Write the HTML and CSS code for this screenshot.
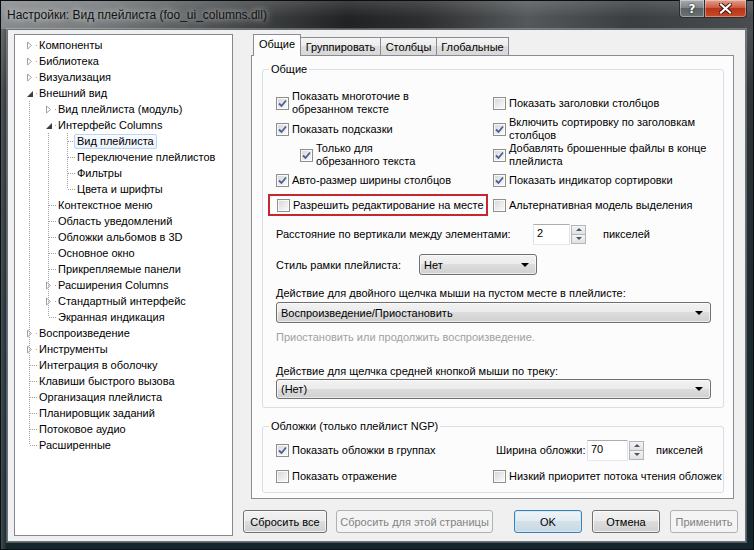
FILE: index.html
```html
<!DOCTYPE html>
<html lang="ru">
<head>
<meta charset="utf-8">
<title>Настройки: Вид плейлиста</title>
<link rel="stylesheet" href="styles.css">
</head>
<body>
<div class="window">
  <div class="titlebar">
    <div class="caption">Настройки: Вид плейлиста (foo_ui_columns.dll)</div>
    <div class="capbtns">
      <div class="capbtn help">?</div>
      <div class="capbtn close">
        <svg width="13" height="11" viewBox="0 0 13 11"><path d="M2 1.5 L11 9.5 M11 1.5 L2 9.5" stroke="#3a1208" stroke-width="4" stroke-linecap="square"/><path d="M2 1.5 L11 9.5 M11 1.5 L2 9.5" stroke="#ffffff" stroke-width="2.2" stroke-linecap="square"/></svg>
      </div>
    </div>
  </div>
  <div class="client">
    <div class="tree">
      <div class="row l0"><span class="tw"><svg class="tri" width="6" height="9" viewBox="0 0 6 9"><path d="M0.5 1 L4.5 4.5 L0.5 8 Z" fill="none" stroke="#a3a3a3"/></svg><span class="dot"></span></span><span class="txt">Компоненты</span></div>
      <div class="row l0"><span class="tw"><svg class="tri" width="6" height="9" viewBox="0 0 6 9"><path d="M0.5 1 L4.5 4.5 L0.5 8 Z" fill="none" stroke="#a3a3a3"/></svg><span class="dot"></span></span><span class="txt">Библиотека</span></div>
      <div class="row l0"><span class="tw"><svg class="tri" width="6" height="9" viewBox="0 0 6 9"><path d="M0.5 1 L4.5 4.5 L0.5 8 Z" fill="none" stroke="#a3a3a3"/></svg><span class="dot"></span></span><span class="txt">Визуализация</span></div>
      <div class="row l0"><span class="tw"><svg class="tri" width="6" height="9" viewBox="0 0 6 9"><path d="M6 2 V8 H0 Z" fill="#3d3d3d"/></svg><span class="dot"></span></span><span class="txt">Внешний вид</span></div>
      <div class="branch b0">
        <div class="row l1"><span class="tw"><svg class="tri" width="6" height="9" viewBox="0 0 6 9"><path d="M0.5 1 L4.5 4.5 L0.5 8 Z" fill="none" stroke="#a3a3a3"/></svg><span class="dot"></span></span><span class="txt">Вид плейлиста (модуль)</span></div>
        <div class="row l1"><span class="tw"><svg class="tri" width="6" height="9" viewBox="0 0 6 9"><path d="M6 2 V8 H0 Z" fill="#3d3d3d"/></svg><span class="dot"></span></span><span class="txt">Интерфейс Columns</span></div>
        <div class="branch b1">
          <div class="branch b2">
            <div class="row l2"><span class="tw leaf"></span><span class="txt sel">Вид плейлиста</span></div>
            <div class="row l2"><span class="tw leaf"></span><span class="txt">Переключение плейлистов</span></div>
            <div class="row l2"><span class="tw leaf"></span><span class="txt">Фильтры</span></div>
            <div class="row l2"><span class="tw leaf"></span><span class="txt">Цвета и шрифты</span></div>
          </div>
          <div class="row l1"><span class="tw leaf"></span><span class="txt">Контекстное меню</span></div>
          <div class="row l1"><span class="tw leaf"></span><span class="txt">Область уведомлений</span></div>
          <div class="row l1"><span class="tw leaf"></span><span class="txt">Обложки альбомов в 3D</span></div>
          <div class="row l1"><span class="tw leaf"></span><span class="txt">Основное окно</span></div>
          <div class="row l1"><span class="tw leaf"></span><span class="txt">Прикрепляемые панели</span></div>
          <div class="row l1"><span class="tw"><svg class="tri" width="6" height="9" viewBox="0 0 6 9"><path d="M0.5 1 L4.5 4.5 L0.5 8 Z" fill="none" stroke="#a3a3a3"/></svg><span class="dot"></span></span><span class="txt">Расширения Columns</span></div>
          <div class="row l1"><span class="tw"><svg class="tri" width="6" height="9" viewBox="0 0 6 9"><path d="M0.5 1 L4.5 4.5 L0.5 8 Z" fill="none" stroke="#a3a3a3"/></svg><span class="dot"></span></span><span class="txt">Стандартный интерфейс</span></div>
          <div class="row l1"><span class="tw leaf"></span><span class="txt">Экранная индикация</span></div>
        </div>
        <div class="row l0"><span class="tw"><svg class="tri" width="6" height="9" viewBox="0 0 6 9"><path d="M0.5 1 L4.5 4.5 L0.5 8 Z" fill="none" stroke="#a3a3a3"/></svg><span class="dot"></span></span><span class="txt">Воспроизведение</span></div>
        <div class="row l0"><span class="tw"><svg class="tri" width="6" height="9" viewBox="0 0 6 9"><path d="M0.5 1 L4.5 4.5 L0.5 8 Z" fill="none" stroke="#a3a3a3"/></svg><span class="dot"></span></span><span class="txt">Инструменты</span></div>
        <div class="row l0"><span class="tw leaf"></span><span class="txt">Интеграция в оболочку</span></div>
        <div class="row l0"><span class="tw leaf"></span><span class="txt">Клавиши быстрого вызова</span></div>
        <div class="row l0"><span class="tw leaf"></span><span class="txt">Организация плейлиста</span></div>
        <div class="row l0"><span class="tw leaf"></span><span class="txt">Планировщик заданий</span></div>
        <div class="row l0"><span class="tw leaf"></span><span class="txt">Потоковое аудио</span></div>
        <div class="row l0"><span class="tw leaf"></span><span class="txt">Расширенные</span></div>
      </div>
    </div>

    <div class="main">
      <div class="tabstrip">
        <div class="tab active t1">Общие</div>
        <div class="tab t2">Группировать</div>
        <div class="tab t3">Столбцы</div>
        <div class="tab t4">Глобальные</div>
      </div>
      <div class="panel">
        <fieldset class="group g1">
          <legend>Общие</legend>
          <div class="opts">
            <label class="cb"><span class="box on"><svg width="11" height="11" viewBox="0 0 11 11"><path d="M2 5.5 L4.5 8 L9 2.5" fill="none" stroke="#4a5f97" stroke-width="1.8"/></svg></span><span class="lbl">Показать многоточие в<br>обрезанном тексте</span></label>
            <label class="cb"><span class="box"></span><span class="lbl">Показать заголовки столбцов</span></label>

            <label class="cb"><span class="box on"><svg width="11" height="11" viewBox="0 0 11 11"><path d="M2 5.5 L4.5 8 L9 2.5" fill="none" stroke="#4a5f97" stroke-width="1.8"/></svg></span><span class="lbl">Показать подсказки</span></label>
            <label class="cb"><span class="box on"><svg width="11" height="11" viewBox="0 0 11 11"><path d="M2 5.5 L4.5 8 L9 2.5" fill="none" stroke="#4a5f97" stroke-width="1.8"/></svg></span><span class="lbl">Включить сортировку по заголовкам<br>столбцов</span></label>

            <label class="cb indent"><span class="box on"><svg width="11" height="11" viewBox="0 0 11 11"><path d="M2 5.5 L4.5 8 L9 2.5" fill="none" stroke="#4a5f97" stroke-width="1.8"/></svg></span><span class="lbl">Только для<br>обрезанного текста</span></label>
            <label class="cb"><span class="box on"><svg width="11" height="11" viewBox="0 0 11 11"><path d="M2 5.5 L4.5 8 L9 2.5" fill="none" stroke="#4a5f97" stroke-width="1.8"/></svg></span><span class="lbl">Добавлять брошенные файлы в конце<br>плейлиста</span></label>

            <label class="cb"><span class="box on"><svg width="11" height="11" viewBox="0 0 11 11"><path d="M2 5.5 L4.5 8 L9 2.5" fill="none" stroke="#4a5f97" stroke-width="1.8"/></svg></span><span class="lbl">Авто-размер ширины столбцов</span></label>
            <label class="cb"><span class="box on"><svg width="11" height="11" viewBox="0 0 11 11"><path d="M2 5.5 L4.5 8 L9 2.5" fill="none" stroke="#4a5f97" stroke-width="1.8"/></svg></span><span class="lbl">Показать индикатор сортировки</span></label>

            <label class="cb hl"><span class="box"></span><span class="lbl">Разрешить редактирование на месте</span></label>
            <label class="cb"><span class="box"></span><span class="lbl">Альтернативная модель выделения</span></label>
          </div>

          <div class="frow spacing">
            <span class="flabel w-spacing">Расстояние по вертикали между элементами:</span>
            <span class="spin s1"><span class="edit">2</span><span class="updown"><span class="ud up"></span><span class="ud down"></span></span></span>
            <span class="unit u1">пикселей</span>
          </div>
          <div class="frow border">
            <span class="flabel w-border">Стиль рамки плейлиста:</span>
            <span class="combo c-small">Нет</span>
          </div>
          <div class="blabel first">Действие для двойного щелчка мыши на пустом месте в плейлисте:</div>
          <div class="combo c-wide">Воспроизведение/Приостановить</div>
          <div class="hint">Приостановить или продолжить воспроизведение.</div>
          <div class="blabel second">Действие для щелчка средней кнопкой мыши по треку:</div>
          <div class="combo c-wide c-last">(Нет)</div>
        </fieldset>

        <fieldset class="group g2">
          <legend>Обложки (только плейлист NGP)</legend>
          <div class="opts2">
            <label class="cb"><span class="box on"><svg width="11" height="11" viewBox="0 0 11 11"><path d="M2 5.5 L4.5 8 L9 2.5" fill="none" stroke="#4a5f97" stroke-width="1.8"/></svg></span><span class="lbl">Показать обложки в группах</span></label>
            <div class="frow cover">
              <span class="flabel w-cover">Ширина обложки:</span>
              <span class="spin s2"><span class="edit">70</span><span class="updown"><span class="ud up"></span><span class="ud down"></span></span></span>
              <span class="unit u2">пикселей</span>
            </div>
            <label class="cb"><span class="box"></span><span class="lbl">Показать отражение</span></label>
            <label class="cb"><span class="box"></span><span class="lbl">Низкий приоритет потока чтения обложек</span></label>
          </div>
        </fieldset>
      </div>

      <div class="buttons">
        <div class="btn b-reset">Сбросить все</div>
        <div class="btn disabled b-page">Сбросить для этой страницы</div>
        <div class="btn default b-ok">OK</div>
        <div class="btn b-cancel">Отмена</div>
        <div class="btn disabled b-apply">Применить</div>
      </div>
    </div>
  </div>
</div>
</body>
</html>
```

FILE: styles.css
```css
* { box-sizing: border-box; }

html, body {
  margin: 0;
  padding: 0;
}

body {
  width: 754px;
  height: 550px;
  overflow: hidden;
  font-family: "Liberation Sans", Arial, sans-serif;
  font-size: 11px;
  color: #000;
  background: #1b2226;
}

.window {
  width: 754px;
  height: 550px;
  display: flex;
  flex-direction: column;
  border: 1px solid #0b0e10;
  background:
    linear-gradient(to right, rgba(255,255,255,0.18) 0, rgba(255,255,255,0) 6px),
    linear-gradient(to bottom, #595d60 0, #2f3437 90px, #1e2a30 300px, #15252c 100%);
}

/* ---------- title bar ---------- */
.titlebar {
  height: 28px;
  display: flex;
  align-items: flex-start;
  background:
    linear-gradient(to bottom, rgba(255,255,255,0.14), rgba(255,255,255,0) 60%),
    linear-gradient(to right, #8a8d8f 0%, #74787a 14%, #4a4d4f 30%, #202223 46%, #2c2e30 56%, #55585a 70%, #3b3e40 84%, #4a4d50 100%);
}

.caption {
  padding-left: 6px;
  line-height: 29px;
  font-size: 12px;
  color: #111;
  text-shadow: 0 0 6px rgba(255,255,255,0.7), 0 0 10px rgba(255,255,255,0.5);
}

.capbtns {
  margin-left: auto;
  margin-right: 6px;
  margin-top: -1px;
  display: flex;
}

.capbtn {
  height: 18px;
  display: flex;
  align-items: center;
  justify-content: center;
  border: 1px solid #2a2d2f;
  border-top: none;
  box-shadow: inset 0 0 0 1px rgba(255,255,255,0.35);
}

.capbtn.help {
  width: 25px;
  border-radius: 0 0 0 4px;
  border-right: none;
  background: linear-gradient(to bottom, #a8acae 0%, #80858a 45%, #5b6166 50%, #6b7276 100%);
  color: #fff;
  font-family: "DejaVu Sans", sans-serif;
  font-weight: bold;
  font-size: 12px;
  text-shadow: 0 0 2px #000;
}

.capbtn.close {
  width: 43px;
  border-radius: 0 0 4px 0;
  background: linear-gradient(to bottom, #e2a08f 0%, #cf5b40 45%, #b53618 50%, #c9492a 100%);
}

/* ---------- client ---------- */
.client {
  flex: 1;
  margin: 0 7px 7px 6px;
  display: flex;
  background: #f0f0f0;
  border: 1px solid #6d7478;
  box-shadow: 0 0 0 1px rgba(255,255,255,0.25);
  padding: 4px 6px 5px 6px;
}

/* ---------- tree ---------- */
.tree {
  width: 219px;
  height: 502px;
  flex: none;
  background: #fff;
  border: 1px solid #828790;
  padding-top: 2px;
}

.row {
  height: 16px;
  display: flex;
  align-items: center;
  white-space: nowrap;
}

.row.l0 { padding-left: 9px; }
.row.l1 { padding-left: 28px; }
.row.l2 { padding-left: 47px; }

.tw {
  width: 15px;
  height: 16px;
  flex: none;
  display: flex;
  align-items: center;
}

.tw .tri {
  margin-left: 3px;
  flex: none;
}

.tw .dot {
  width: 1px;
  height: 1px;
  margin-left: 3px;
  background: #a0a0a0;
}

.tw.leaf {
  background: repeating-linear-gradient(to right, #a0a0a0 0 1px, transparent 1px 2px) no-repeat;
  background-size: 8px 1px;
  background-position: 6px 8px;
}

.txt {
  line-height: 16px;
}

.txt.sel {
  margin-left: -3px;
  padding: 0 2px;
  height: 15px;
  line-height: 13px;
  border: 1px solid #b8d6fb;
  border-radius: 2px;
  background: linear-gradient(to bottom, #fafbfd, #ebf3fd);
}

.branch {
  background-image: repeating-linear-gradient(to bottom, #a0a0a0 0 1px, transparent 1px 2px);
  background-repeat: no-repeat;
  background-size: 1px calc(100% - 8px);
}

.branch.b0 { background-position: 14px 0; }
.branch.b1 { background-position: 33px 0; }
.branch.b2 { background-position: 52px 0; }

/* ---------- main column ---------- */
.main {
  margin-left: 10px;
  width: 496px;
  flex: none;
  display: flex;
  flex-direction: column;
}

.tabstrip {
  height: 21px;
  margin-left: 8px;
  padding-left: 2px;
  display: flex;
  align-items: flex-end;
}

.tab {
  height: 18px;
  border: 1px solid #898c95;
  border-bottom: none;
  display: flex;
  align-items: center;
  justify-content: center;
  background: linear-gradient(to bottom, #f5f5f5 0%, #ebebeb 50%, #dedede 50%, #d8d8d8 100%);
  margin-left: -1px;
}

.tab.active {
  height: 22px;
  margin-bottom: -1px;
  background: #fcfcfc;
  position: relative;
  z-index: 1;
  margin-left: 0;
  padding-bottom: 3px;
}

.t1 { width: 48px; }
.t2 { width: 81px; }
.t3 { width: 57px; }
.t4 { width: 73px; }

.panel {
  width: 483px;
  height: 444px;
  margin-left: 8px;
  border: 1px solid #898c95;
  background: #fcfcfc;
  padding: 6px 9px 0 10px;
}

/* ---------- group boxes ---------- */
.group {
  margin: 0;
  border: 1px solid #d5dfe5;
  border-radius: 3px;
  padding: 0 0 8px 13px;
}

.group legend {
  margin-left: -7px;
  padding: 0 2px;
  line-height: 14px;
}

.opts {
  padding-top: 14px;
  display: grid;
  grid-template-columns: 217px 1fr;
  grid-template-rows: 26px 26px 26px 24px 26px;
  align-items: center;
}

.cb {
  display: flex;
  align-items: center;
  white-space: nowrap;
}

.cb.indent { padding-left: 24px; }

.lbl {
  line-height: 13px;
}

.box {
  width: 13px;
  height: 13px;
  flex: none;
  margin-right: 3px;
  border: 1px solid #8e8f8f;
  background: linear-gradient(135deg, #d2d4d6 0%, #ececec 55%, #fbfbfb 100%);
  box-shadow: inset 0 0 0 1px rgba(255,255,255,0.75);
  display: flex;
  align-items: center;
  justify-content: center;
}

.cb.hl {
  width: 220px;
  height: 22px;
  margin-left: -8px;
  padding-left: 7px;
  border: 2px solid #c4282e;
}

.frow {
  display: flex;
  align-items: center;
  white-space: nowrap;
}

.frow.spacing { margin-top: 4px; height: 24px; }
.frow.border { margin-top: 8px; height: 21px; }

.w-spacing { width: 257px; flex: none; }
.w-border { width: 143px; flex: none; }
.w-cover { width: 91px; flex: none; }

.spin {
  display: flex;
  align-items: center;
  height: 21px;
}

.edit {
  height: 21px;
  background: #fff;
  border: 1px solid #e2e3ea;
  border-top-color: #abadb3;
  border-bottom-color: #e3e9ef;
  padding-left: 3px;
  line-height: 17px;
}

.s1 .edit { width: 37px; }
.s2 .edit { width: 41px; }

.updown {
  width: 15px;
  height: 19px;
  margin-left: 1px;
  display: flex;
  flex-direction: column;
}

.ud {
  flex: 1;
  border: 1px solid #b2b6ba;
  background: linear-gradient(to bottom, #f4f4f4, #dfe1e3);
  display: flex;
  align-items: center;
  justify-content: center;
}

.ud.down { border-top: none; }

.ud.up::before {
  content: "";
  border-left: 3px solid transparent;
  border-right: 3px solid transparent;
  border-bottom: 3px solid #4d5560;
}

.ud.down::before {
  content: "";
  border-left: 3px solid transparent;
  border-right: 3px solid transparent;
  border-top: 3px solid #4d5560;
}

.u1 { margin-left: 17px; }
.u2 { margin-left: 12px; }

.combo {
  height: 21px;
  display: flex;
  align-items: center;
  padding-left: 4px;
  border: 1px solid #707070;
  border-radius: 3px;
  background: linear-gradient(to bottom, #f2f2f2 0%, #ebebeb 50%, #dddddd 50%, #cfcfcf 100%);
  box-shadow: inset 0 0 0 1px rgba(255,255,255,0.6);
  white-space: nowrap;
}

.combo::after {
  content: "";
  margin-left: auto;
  margin-right: 7px;
  border-left: 4px solid transparent;
  border-right: 4px solid transparent;
  border-top: 4px solid #000;
}

.c-small { width: 118px; }
.c-wide { width: 435px; margin-top: 2px; }
.c-last { margin-top: 1px; height: 20px; }

.blabel { line-height: 14px; }
.blabel.first { margin-top: 11px; }
.blabel.second { margin-top: 20px; }

.hint {
  margin-top: 7px;
  line-height: 14px;
  color: #a0a0a0;
}

.g2 { margin-top: 11px; padding-bottom: 6px; }

.opts2 {
  margin-top: 5px;
  display: grid;
  grid-template-columns: 217px 1fr;
  grid-template-rows: 24px 20px;
  row-gap: 4px;
  align-items: center;
}

.frow.cover { padding-left: 3px; height: 24px; }

/* ---------- bottom buttons ---------- */
.buttons {
  margin-top: 11px;
  display: flex;
  height: 23px;
}

.btn {
  height: 23px;
  display: flex;
  align-items: center;
  justify-content: center;
  border: 1px solid #707070;
  border-radius: 3px;
  background: linear-gradient(to bottom, #f2f2f2 0%, #ebebeb 50%, #dddddd 50%, #cfcfcf 100%);
  box-shadow: inset 0 0 0 1px rgba(255,255,255,0.7);
  white-space: nowrap;
}

.btn.default {
  border-color: #3c7fb1;
  background: linear-gradient(to bottom, #eef4f8 0%, #e2ebf1 50%, #d3e0e8 50%, #c8d9e4 100%);
  box-shadow: inset 0 0 0 1px rgba(200,235,252,0.9);
}

.btn.disabled {
  border-color: #adb2b5;
  background: #f4f4f4;
  color: #838383;
  box-shadow: none;
}

.b-reset { width: 84px; }
.b-page { width: 157px; margin-left: 9px; }
.b-ok { width: 68px; margin-left: 21px; }
.b-cancel { width: 68px; margin-left: 10px; }
.b-apply { width: 68px; margin-left: 10px; }
```
